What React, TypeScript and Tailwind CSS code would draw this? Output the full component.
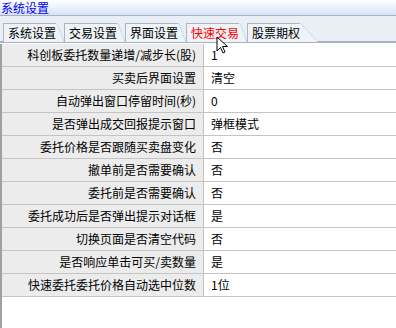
import React from "react";

const rows: [string, string][] = [
  ["科创板委托数量递增/减步长(股)", "1"],
  ["买卖后界面设置", "清空"],
  ["自动弹出窗口停留时间(秒)", "0"],
  ["是否弹出成交回报提示窗口", "弹框模式"],
  ["委托价格是否跟随买卖盘变化", "否"],
  ["撤单前是否需要确认", "否"],
  ["委托前是否需要确认", "否"],
  ["委托成功后是否弹出提示对话框", "是"],
  ["切换页面是否清空代码", "否"],
  ["是否响应单击可买/卖数量", "是"],
  ["快速委托委托价格自动选中位数", "1位"],
];

const tabs = ["系统设置", "交易设置", "界面设置", "快速交易", "股票期权"];

function Tab({ label, active, last }: { label: string; active?: boolean; last?: boolean }) {
  const w = last ? 18 : 8;
  return (
    <div className="flex h-[19px] items-stretch">
      <div
        className={
          "flex items-center border-l border-t border-[#a9b6c4] bg-[#eef3f7] pl-[4px] " +
          (active ? "text-[#ff0000]" : "text-black")
        }
      >
        {label}
      </div>
      <svg width={w} height="19" className="block">
        <polygon points={`0,0 1,0 ${w},19 0,19`} fill="#eef3f7" />
        <line x1="1" y1="0.5" x2={w} y2="19" stroke="#b8c2cc" strokeDasharray="1 1" />
      </svg>
    </div>
  );
}

export default function App() {
  return (
    <div
      className="relative h-[328px] w-[396px] overflow-hidden bg-white text-[12px] leading-none"
      style={{ fontFamily: '"Noto Sans CJK SC", "DejaVu Sans", sans-serif' }}
    >
      <div className="flex h-[16px] items-center border-b border-[#a7b3c2] bg-gradient-to-b from-white to-[#d6e4f5] pl-[1px] text-[#0000ff]">
        系统设置
      </div>
      <div className="h-[27px] border-b-2 border-[#a7b3c2] bg-[#e9eff4] pt-[7px]">
        <div className="flex pl-[3px]">
          {tabs.map((t, i) => (
            <Tab key={t} label={t} active={i === 3} last={i === tabs.length - 1} />
          ))}
        </div>
      </div>
      <div className="mt-[1px] border-l-2 border-[#a0a0a0]">
        {rows.map(([k, v]) => (
          <div key={k} className="flex h-[23px] border-b border-[#c4c4c4]">
            <div className="flex w-[202px] items-center justify-end border-r border-[#c4c4c4] bg-[#ececec] pr-[7px]">
              {k}
            </div>
            <div className="flex flex-1 items-center pl-[7px]">{v}</div>
          </div>
        ))}
        <div className="h-[40px]" />
      </div>
      <svg className="absolute left-[216px] top-[36px]" width="14" height="20" viewBox="0 0 14 20">
        <path d="M1 1 L1 15 L4.5 11.5 L7 17 L9 16 L6.5 10.5 L11.5 10.5 Z" fill="white" stroke="black" strokeWidth="1" strokeLinejoin="miter" />
      </svg>
    </div>
  );
}
